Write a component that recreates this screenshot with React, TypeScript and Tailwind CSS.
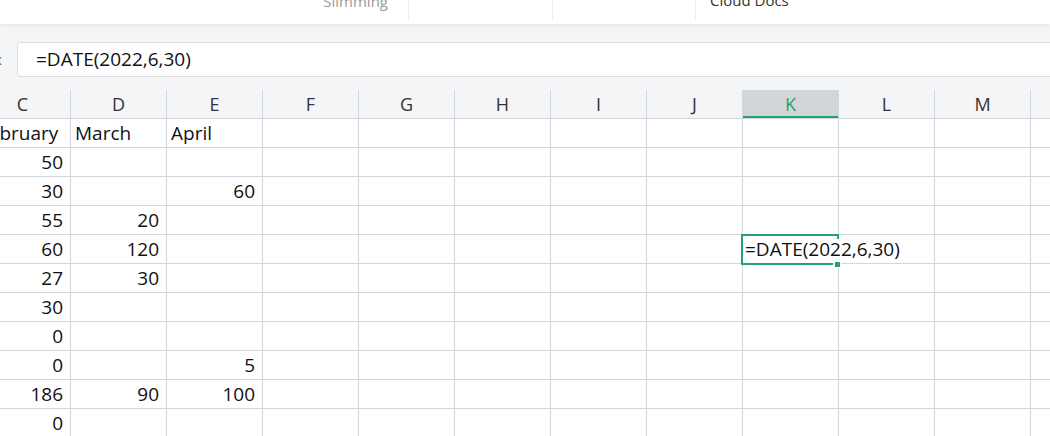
import React from 'react'

const cols = ['C', 'D', 'E', 'F', 'G', 'H', 'I', 'J', 'K', 'L', 'M', 'N']

type Cell = { v: string; num?: boolean }
const rows: Record<string, Cell>[] = [
  { C: { v: 'February' }, D: { v: 'March' }, E: { v: 'April' } },
  { C: { v: '50', num: true } },
  { C: { v: '30', num: true }, E: { v: '60', num: true } },
  { C: { v: '55', num: true }, D: { v: '20', num: true } },
  { C: { v: '60', num: true }, D: { v: '120', num: true } },
  { C: { v: '27', num: true }, D: { v: '30', num: true } },
  { C: { v: '30', num: true } },
  { C: { v: '0', num: true } },
  { C: { v: '0', num: true }, E: { v: '5', num: true } },
  { C: { v: '186', num: true }, D: { v: '90', num: true }, E: { v: '100', num: true } },
  { C: { v: '0', num: true } },
]

const formula = '=DATE(2022,6,30)'

export default function App() {
  return (
    <div className="relative w-[1050px] h-[436px] overflow-hidden bg-[#f4f5f7] font-['Open_Sans',sans-serif] text-[#111]">
      {/* top ribbon, scrolled off */}
      <div className="relative z-10 flex h-[24px] bg-white shadow-[0_2px_4px_rgba(0,0,0,0.06)] text-[15px] leading-none">
        <div className="flex w-[408px] justify-end pr-[20px]">
          <span className="-mt-[6px] text-[#9a9a9a]">Slimming</span>
        </div>
        <div className="w-px h-[20px] bg-[#efefef]" />
        <div className="w-[143px]" />
        <div className="w-px h-[20px] bg-[#efefef]" />
        <div className="w-[142px]" />
        <div className="w-px h-[20px] bg-[#efefef]" />
        <div className="pl-[14px]">
          <span className="block -mt-[7px] text-[#333]">Cloud Docs</span>
        </div>
      </div>

      {/* formula bar */}
      <div className="flex items-center h-[66px] pt-[18px] pb-[13px]">
        <span className="w-[23px] -ml-[6px] text-[15px] text-[#666]">x</span>
        <div className="flex-1 -mr-[10px] h-[35px] flex items-center pl-[18px] bg-white border border-[#dcdde0] rounded-[4px] text-[19px]">
          {formula}
        </div>
      </div>

      {/* sheet */}
      <div className="-ml-[25px] w-[1200px]">
        {/* column headers */}
        <div className="flex h-[29px] border-b border-[#d4d6de] bg-[#f4f5f7]">
          {cols.map(c => (
            <div
              key={c}
              className={
                c === 'K'
                  ? 'w-[96px] shrink-0 flex items-center justify-center border-r border-[#d4d6de] bg-[#d2d5da] text-[#27a070] text-[18px] shadow-[inset_0_-2px_0_#27a070]'
                  : 'w-[96px] shrink-0 flex items-center justify-center border-r border-[#d4d6de] text-[#333] text-[18px]'
              }
            >
              {c}
            </div>
          ))}
        </div>

        {/* data rows */}
        {rows.map((r, ri) => (
          <div key={ri} className="flex h-[29px] bg-white">
            {cols.map(c => {
              const cell = r[c]
              if (ri === 4 && c === 'K') {
                return (
                  <div key={c} className="relative z-10 w-[96px] shrink-0 h-[29px] border-r border-b border-[#d4d6de]">
                    <span className="absolute left-[1px] top-[1px] h-[26px] flex items-center pl-[1px] pr-[4px] bg-white whitespace-nowrap text-[19px]">
                      {formula}
                    </span>
                    {/* selection frame */}
                    <div className="absolute -left-[2px] -top-[1px] w-[98px] h-[2px] bg-[#27a070]" />
                    <div className="absolute -left-[2px] -top-[1px] w-[2px] h-[31px] bg-[#27a070]" />
                    <div className="absolute -left-[2px] top-[28px] w-[92px] h-[2px] bg-[#27a070]" />
                    <div className="absolute right-[-1px] -top-[1px] w-[2px] h-[5px] bg-[#27a070]" />
                    <div className="absolute right-[-2px] top-[27px] w-[5px] h-[5px] bg-[#27a070] outline outline-1 outline-white" />
                  </div>
                )
              }
              return (
                <div
                  key={c}
                  className={
                    cell?.num
                      ? 'w-[96px] shrink-0 h-[29px] flex items-center justify-end pr-[7px] border-r border-b border-[#d4d6de] text-[19px] whitespace-nowrap'
                      : 'w-[96px] shrink-0 h-[29px] flex items-center pl-[4px] border-r border-b border-[#d4d6de] text-[19px] whitespace-nowrap'
                  }
                >
                  {cell?.v}
                </div>
              )
            })}
          </div>
        ))}
      </div>
    </div>
  )
}
